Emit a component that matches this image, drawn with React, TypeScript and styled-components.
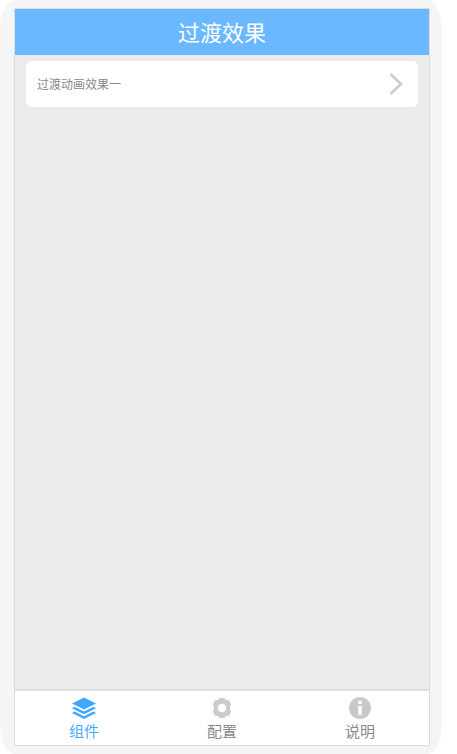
import { createGlobalStyle, styled } from "styled-components";
import { ReactNode } from "react";

const GlobalStyle = createGlobalStyle`
  html, body {
    margin: 0;
    padding: 0;
    background: #fff;
  }
  body {
    font-family: "Noto Sans CJK SC", "Noto Sans", sans-serif;
  }
`;

function LayersIcon() {
  return (
    <svg width="26" height="22" viewBox="0 0 26 22" fill="#3fa7ff">
      <path d="M13 0.5 25 6.5 13 12.5 1 6.5Z" />
      <path d="M3.6 9.8 13 14.6 22.4 9.8 25 11.2 13 17.2 1 11.2Z" />
      <path d="M3.6 14.6 13 19.2 22.4 14.6 25 16 13 22 1 16Z" />
    </svg>
  );
}

function GearIcon() {
  return (
    <svg width="22" height="22" viewBox="0 0 22 22" fill="#cbcbcb">
      <path
        fillRule="evenodd"
        d="M9.2 1H12.8Q13.9 1 14.3 2L14.8 3.2 16.6 3Q17.6 2.9 18.2 3.8L19.9 6.8Q20.4 7.7 19.8 8.5L19 9.6V12.4L19.8 13.5Q20.4 14.3 19.9 15.2L18.2 18.2Q17.6 19.1 16.6 19L14.8 18.8 14.3 20Q13.9 21 12.8 21H9.2Q8.1 21 7.7 20L7.2 18.8 5.4 19Q4.4 19.1 3.8 18.2L2.1 15.2Q1.6 14.3 2.2 13.5L3 12.4V9.6L2.2 8.5Q1.6 7.7 2.1 6.8L3.8 3.8Q4.4 2.9 5.4 3L7.2 3.2 7.7 2Q8.1 1 9.2 1ZM11 6.8A4.2 4.2 0 1 0 11 15.2 4.2 4.2 0 1 0 11 6.8Z"
      />
    </svg>
  );
}

function InfoIcon() {
  return (
    <svg width="22" height="22" viewBox="0 0 22 22">
      <circle cx="11" cy="11" r="11" fill="#c9c9c9" />
      <rect x="9.3" y="3.8" width="3.4" height="3.2" rx="0.6" fill="#fff" />
      <rect x="9.3" y="8.8" width="3.4" height="9.2" rx="0.6" fill="#fff" />
    </svg>
  );
}

function Chevron() {
  return (
    <ChevronSvg width="14" height="22" viewBox="0 0 14 22" fill="none">
      <path d="M1.5 1 12 11 1.5 21" stroke="#cccccc" strokeWidth="2.6" />
    </ChevronSvg>
  );
}

const tabs: { label: string; icon: ReactNode; active?: boolean }[] = [
  { label: "组件", icon: <LayersIcon />, active: true },
  { label: "配置", icon: <GearIcon /> },
  { label: "说明", icon: <InfoIcon /> },
];

export default function App() {
  return (
    <>
      <GlobalStyle />
      <Backdrop>
        <Phone>
          <Header>过渡效果</Header>
          <Content>
            <ListItem>
              <ItemLabel>过渡动画效果一</ItemLabel>
              <Chevron />
            </ListItem>
          </Content>
          <TabBar>
            {tabs.map((tab) => (
              <Tab key={tab.label} $active={tab.active}>
                <IconSlot>{tab.icon}</IconSlot>
                {tab.label}
              </Tab>
            ))}
          </TabBar>
        </Phone>
      </Backdrop>
    </>
  );
}

const Backdrop = styled.div`
  box-sizing: border-box;
  width: 442px;
  height: 754px;
  padding: 8px 12px 8px 14px;
  background: #f5f5f5;
  border-radius: 15px / 30px;
`;

const Phone = styled.div`
  box-sizing: border-box;
  height: 100%;
  display: flex;
  flex-direction: column;
  border: 1px solid #dcdcdc;
  background: #ebebeb;
`;

const Header = styled.div`
  height: 46px;
  display: flex;
  align-items: center;
  justify-content: center;
  padding-bottom: 2px;
  box-sizing: border-box;
  background: #6ab8ff;
  color: #fff;
  font-size: 22px;
  font-weight: 400;
`;

const Content = styled.div`
  flex: 1;
  padding: 6px 11px;
`;

const ListItem = styled.div`
  height: 46px;
  display: flex;
  align-items: center;
  justify-content: space-between;
  padding: 0 15px 0 11px;
  background: #fff;
  border-radius: 6px;
`;

const ItemLabel = styled.span`
  margin-bottom: 2px;
  color: #888;
  font-size: 12px;
  font-weight: 400;
`;

const ChevronSvg = styled.svg`
  display: block;
`;

const TabBar = styled.div`
  height: 56px;
  box-sizing: border-box;
  display: grid;
  grid-template-columns: repeat(3, 1fr);
  border-top: 2px solid #dedede;
  background: #fff;
`;

const Tab = styled.div<{ $active?: boolean }>`
  display: flex;
  flex-direction: column;
  align-items: center;
  padding-top: 6px;
  color: ${(p) => (p.$active ? "#4aa8ff" : "#888")};
  font-size: 15px;
  font-weight: 400;
  line-height: 20px;
`;

const IconSlot = styled.div`
  height: 22px;
  margin-bottom: 2px;
`;
